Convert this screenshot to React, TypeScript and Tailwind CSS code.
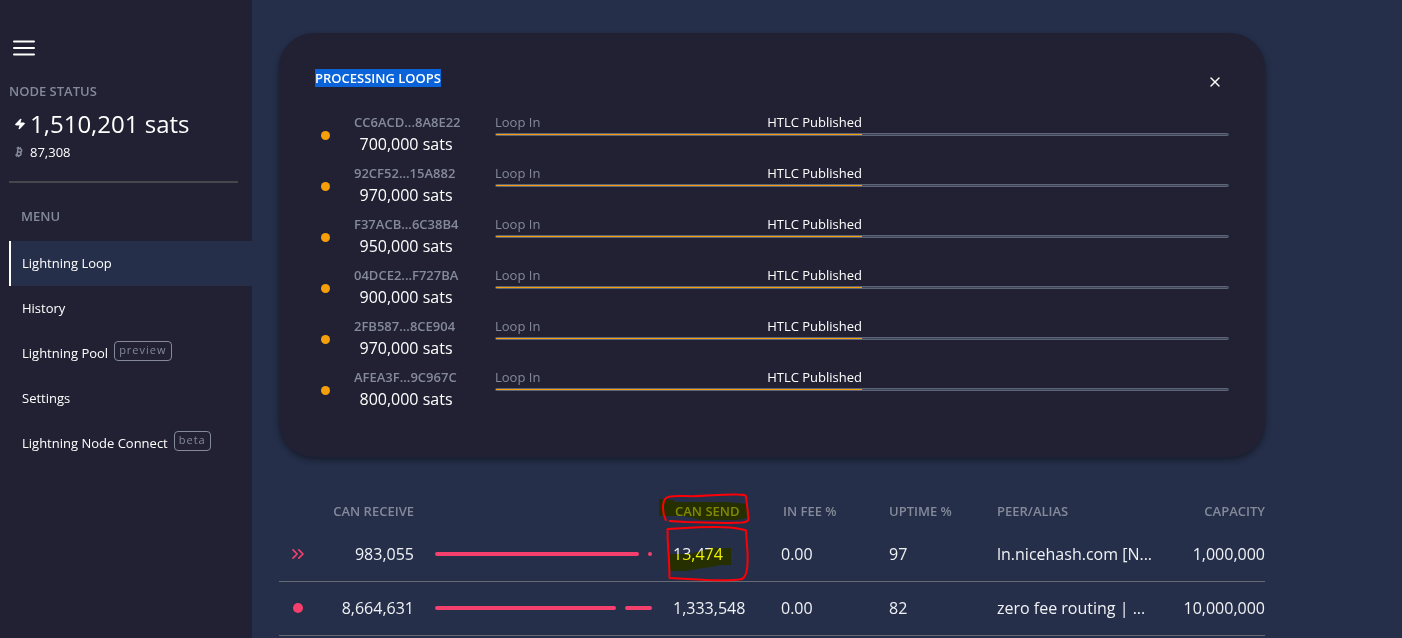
import { Zap, Bitcoin, ChevronsRight, X } from "lucide-react";

type Loop = { id: string; amount: string };

const loops: Loop[] = [
  { id: "CC6ACD...8A8E22", amount: "700,000" },
  { id: "92CF52...15A882", amount: "970,000" },
  { id: "F37ACB...6C38B4", amount: "950,000" },
  { id: "04DCE2...F727BA", amount: "900,000" },
  { id: "2FB587...8CE904", amount: "970,000" },
  { id: "AFEA3F...9C967C", amount: "800,000" },
];

const menu = [
  { label: "Lightning Loop", active: true },
  { label: "History" },
  { label: "Lightning Pool", badge: "preview" },
  { label: "Settings" },
  { label: "Lightning Node Connect", badge: "beta" },
];

const channels = [
  { receive: "983,055", send: "13,474", remotePct: 98, inFee: "0.00", uptime: "97", alias: "ln.nicehash.com [N...", capacity: "1,000,000", selected: true },
  { receive: "8,664,631", send: "1,333,548", remotePct: 87, inFee: "0.00", uptime: "82", alias: "zero fee routing | ...", capacity: "10,000,000", selected: false },
];

function Sidebar() {
  return (
    <aside className="w-[252px] shrink-0 bg-[#212133] pt-9 pl-[9px]">
      <button aria-label="Toggle menu" className="block pl-1">
        <svg width="22" height="24" viewBox="0 0 22 24" stroke="white" strokeWidth="2" strokeLinecap="round">
          <path d="M1 5.5h20M1 12h20M1 18.5h20" />
        </svg>
      </button>
      <h2 className="mt-[22px] text-[13px] leading-[18px] font-semibold text-[#848a99]">NODE STATUS</h2>
      <p className="mt-2 flex h-8 items-center text-[24px] leading-8">
        <Zap size={12} fill="white" className="mr-1 ml-[5px] shrink-0" />
        1,510,201 sats
      </p>
      <p className="mt-[3px] flex items-center text-[13px] leading-[18px]">
        <Bitcoin size={12} strokeWidth={3} className="mr-[5px] ml-1 shrink-0 text-[#848a99]" />
        87,308
      </p>
      <hr className="mt-5 mr-[14px] border-t-2 border-[#46464d]" />
      <h2 className="mt-6 pl-3 text-[13px] leading-[18px] font-semibold text-[#848a99]">MENU</h2>
      <nav className="mt-4">
        {menu.map((item) => (
          <a
            key={item.label}
            href="#"
            className={`flex h-[45px] items-center border-l-2 pl-[11px] text-[13px] ${
              item.active ? "border-white bg-[#252f4a]" : "border-transparent"
            }`}
          >
            {item.label}
            {item.badge && (
              <span className="mb-[6px] ml-[6px] h-5 rounded border border-[#848a99] px-1 text-[11px] leading-4 tracking-[1px] text-[#848a99]">
                {item.badge}
              </span>
            )}
          </a>
        ))}
      </nav>
    </aside>
  );
}

function LoopRow({ id, amount }: Loop) {
  return (
    <li className="flex items-start">
      <span className="mt-[18px] ml-[6px] size-[9px] shrink-0 rounded-full bg-[#f59f0b]" />
      <div className="ml-6 w-[104px] shrink-0">
        <h4 className="text-[13px] leading-[18px] font-semibold text-[#848a99]">{id}</h4>
        <p className="text-center text-[16px] leading-[26px]">{amount} sats</p>
      </div>
      <div className="ml-[37px] flex-1">
        <div className="flex w-1/2 justify-between text-[13px] leading-[18px]">
          <span className="text-[#848a99]">Loop In</span>
          <span>HTLC Published</span>
        </div>
        <div className="mt-[2px] h-[3px] rounded-sm border border-[#5d6478] bg-[#3f4659]">
          <div className="h-px w-1/2 bg-[#f59f0b]" />
        </div>
      </div>
    </li>
  );
}

function ProcessingLoops() {
  return (
    <section className="rounded-[35px] bg-[#212133] px-9 pt-9 pb-[45px] shadow-[0_3px_6px_#0006]">
      <header className="flex items-start justify-between">
        <h3 className="bg-[#0a63d8] text-[13px] leading-[18px] font-semibold">PROCESSING LOOPS</h3>
        <button aria-label="Close" className="mt-[5px] mr-[6px]">
          <X size={16} />
        </button>
      </header>
      <ul className="mt-[23px] flex flex-col gap-[7px]">
        {loops.map((loop) => (
          <LoopRow key={loop.id} {...loop} />
        ))}
      </ul>
    </section>
  );
}

function BalanceBar({ pct }: { pct: number }) {
  return (
    <div className="flex h-1 gap-[9px]">
      <div className="rounded-full bg-[#f5406e]" style={{ flexGrow: pct, flexBasis: 0 }} />
      <div className="rounded-full bg-[#f5406e]" style={{ flexGrow: 100 - pct, flexBasis: 0 }} />
    </div>
  );
}

// hand-drawn highlighter and pen over the "can send" cells
function Annotation() {
  return (
    <>
      <svg
        aria-hidden="true"
        className="pointer-events-none absolute -top-[6px] -left-[18px] mix-blend-multiply"
        width="100"
        height="100"
        viewBox="0 0 100 100"
        fill="#ffff00"
      >
        <path d="M4 11l14 1 2 2h52l20 2v14l-10 2H45l-15-4H4z" />
        <path d="M15 66h18l14-3 10-3h19v17H65l-9 2-8 1-17 3H15z" />
      </svg>
      <svg
        aria-hidden="true"
        className="pointer-events-none absolute -top-[6px] -left-[18px]"
        width="100"
        height="100"
        viewBox="0 0 100 100"
        fill="none"
        stroke="#fb0007"
        strokeWidth="2"
        strokeLinecap="round"
        strokeLinejoin="round"
      >
        <path d="M10.700 32C7 24 7 14 11 10c4-3 13-2 19-2 18 1 34-2 52-1.500 5 0 9 0 9 2.500l1 8 1.500 14c0 2-2 3-6 3.500-20 1.500-40-.5-57-.5L14.500 33" />
        <path d="M12.500 41c20-1 40-3 63-1.500 8 1 12 1.500 15.500 3l1.500 22c.5 12 0 20-3 24-1 2-2 3-5 3-9 1.500-24 .5-33 .5L14.500 90 14 72c-1-12-1.500-20-1.500-31z" />
      </svg>
    </>
  );
}

function Channels() {
  return (
    <table className="mt-[37px] w-full table-fixed text-left whitespace-nowrap">
      <colgroup>
        <col className="w-[38px]" />
        <col className="w-[97px]" />
        <col className="w-[259px]" />
        <col className="w-[108px]" />
        <col className="w-[108px]" />
        <col className="w-[108px]" />
        <col />
        <col className="w-[108px]" />
      </colgroup>
      <thead className="text-[13px] leading-[18px] text-[#848a99]">
        <tr className="h-[33px] [&>th]:font-semibold">
          <th aria-label="Status" />
          <th className="text-right">CAN RECEIVE</th>
          <th aria-label="Balance" />
          <th className="relative pl-[2px]">
            CAN SEND
            <Annotation />
          </th>
          <th className="pl-[2px]">IN FEE %</th>
          <th>UPTIME %</th>
          <th>PEER/ALIAS</th>
          <th className="text-right">CAPACITY</th>
        </tr>
      </thead>
      <tbody className="text-[16px] font-medium text-[#f0f1f4]">
        {channels.map((c) => (
          <tr key={c.alias} className="h-[54px] border-b border-[#686a73]">
            <td className="pl-[9px] text-[#f5406e]">
              {c.selected ? <ChevronsRight size={20} /> : <span className="ml-[5px] block size-[10px] rounded-full bg-[#f5406e]" />}
            </td>
            <td className="text-right">{c.receive}</td>
            <td className="px-[21px]">
              <BalanceBar pct={c.remotePct} />
            </td>
            <td>{c.send}</td>
            <td>{c.inFee}</td>
            <td>{c.uptime}</td>
            <td>{c.alias}</td>
            <td className="text-right">{c.capacity}</td>
          </tr>
        ))}
      </tbody>
    </table>
  );
}

export default function App() {
  return (
    <div className="flex min-h-screen bg-[#252f4a] font-['Open_Sans','Noto_Sans',sans-serif] text-white">
      <Sidebar />
      <main className="min-w-0 flex-1 pt-[33px] pr-[137px] pl-[27px]">
        <ProcessingLoops />
        <Channels />
      </main>
    </div>
  );
}
